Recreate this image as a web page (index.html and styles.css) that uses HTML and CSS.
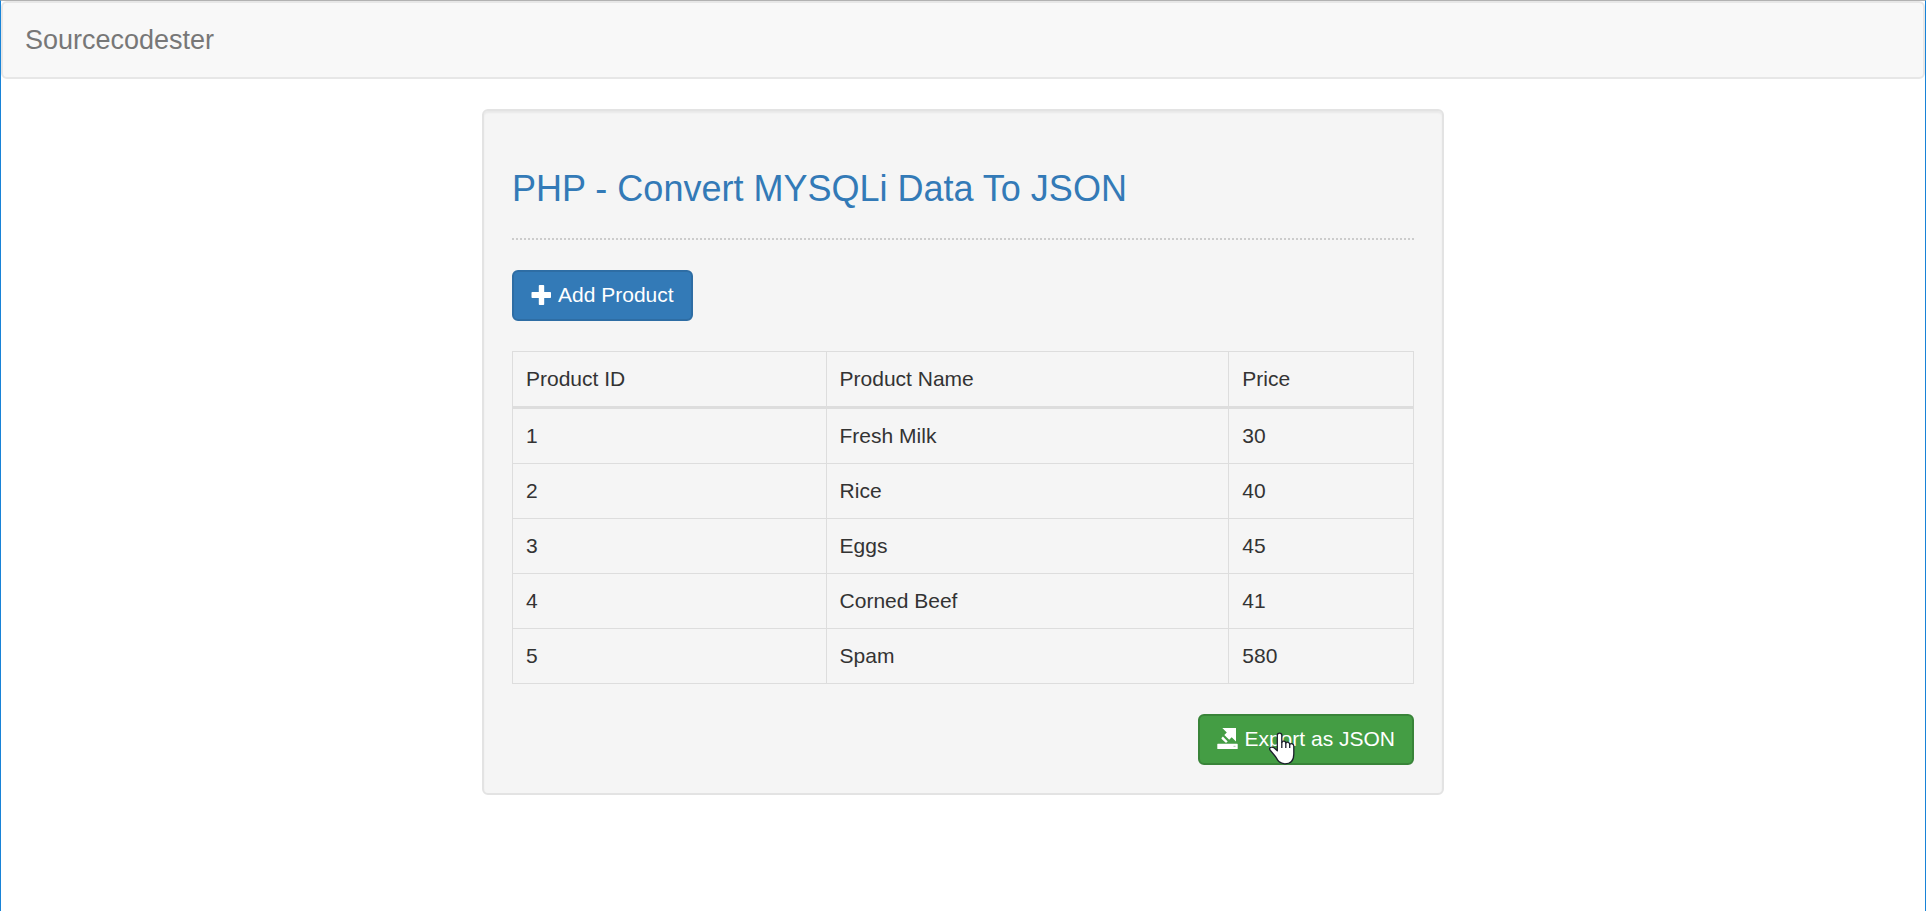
FILE: index.html
```html
<!DOCTYPE html>
<html lang="en">
<head>
<meta charset="utf-8">
<title>PHP - Convert MYSQLi Data To JSON</title>
<link rel="stylesheet" href="styles.css">
</head>
<body>
<nav class="navbar"><a class="brand" href="#">Sourcecodester</a></nav>
<main class="well">
  <h3 class="title">PHP - Convert MYSQLi Data To JSON</h3>
  <hr class="rule">
  <button class="btn btn-primary" type="button">
    <svg class="icon" viewBox="0 0 21 21" aria-hidden="true"><path d="M8.600 0h3.800q.8 0 .8.800v6.200h6q.8 0 .8.800v4.400q0 .8-.8.800h-6v6.200q0 .8-.8.800H8.600q-.8 0-.8-.8V13h-6.500q-.8 0-.8-.8V7.800q0-.8.800-.8h6.500V.8q0-.8.800-.8z"/></svg>
    <span>Add Product</span>
  </button>
  <table class="table">
    <thead>
      <tr><th class="col-id" scope="col">Product ID</th><th class="col-name" scope="col">Product Name</th><th scope="col">Price</th></tr>
    </thead>
    <tbody>
      <tr><td>1</td><td>Fresh Milk</td><td>30</td></tr>
      <tr><td>2</td><td>Rice</td><td>40</td></tr>
      <tr><td>3</td><td>Eggs</td><td>45</td></tr>
      <tr><td>4</td><td>Corned Beef</td><td>41</td></tr>
      <tr><td>5</td><td>Spam</td><td>580</td></tr>
    </tbody>
  </table>
  <button class="btn btn-success" type="button">
    <svg class="icon" viewBox="0 1 21 21" aria-hidden="true"><path d="M5.300 0H19v13.500l-4.300-4.200-2.500 2.500L7.300 6.900l2.500-2.500z"/><path d="M5.900 8.600l4.800 4.800-1.200 1q-.7.500-1.300-.1L4.700 11q-.6-.7 0-1.300z"/><path d="M.8 15.700h19.400q.5 0 .5.500v4.300q0 .5-.5.500H.8q-.5 0-.5-.5v-4.300q0-.5.500-.5z"/><path class="light" d="M16.500 18.300h2"/></svg>
    <span>Export as JSON</span>
    <svg class="cursor" viewBox="0 0 26 33" aria-hidden="true"><path d="M8.300 3.200C8.300.3 12.800.3 12.800 3.200V10.300C14 8.400 16.600 9 16.800 11 18.200 9.500 20.600 10.200 20.700 12.200 22.400 11 24.800 12 24.800 14.200V22C24.800 28.500 21.500 31.800 16 31.800 10.500 31.800 8.800 28.500 6.800 25L1 18C-.4 15.800 2.500 14.300 5 15.800L8.300 18.800z"/><path d="M12.800 10v6M16.800 11v5M20.700 12v4"/></svg>
  </button>
</main>
</body>
</html>
```
FILE: styles.css
```css
* { box-sizing: border-box; }

body {
  margin: 0;
  min-height: 100vh;
  border: 1px solid #1883d7;
  border-top-color: #b2b2b2;
  border-bottom: 0;
  background: #fff;
  color: #333;
  font: 21px/30px "Liberation Sans", Arial, sans-serif;
}

.navbar {
  display: flex;
  align-items: center;
  padding: 22px;
  border: 2px solid #e7e7e7;
  border-radius: 6px;
  background: #f8f8f8;
}

.brand {
  color: #777;
  font-size: 27px;
  line-height: 30px;
  text-decoration: none;
}

.well {
  display: flex;
  flex-direction: column;
  align-items: flex-start;
  gap: 30px;
  width: 50%;
  margin: 30px auto;
  padding: 28px;
  border: 2px solid #e3e3e3;
  border-radius: 6px;
  background: #f5f5f5;
  box-shadow: inset 0 2px 2px rgba(0, 0, 0, .05);
}

.title {
  margin: 30px 0 0;
  color: #337ab7;
  font-size: 36px;
  font-weight: 400;
  line-height: 39px;
}

.rule {
  width: 100%;
  margin: 0;
  border: 0;
  border-top: 2px dotted #ccc;
}

.btn {
  position: relative;
  display: flex;
  align-items: center;
  gap: 6px;
  padding: 8px 17px 9px;
  border: 2px solid;
  border-radius: 6px;
  color: #fff;
  font: inherit;
}

.btn-primary {
  border-color: #2e6da4;
  background: #337ab7;
}

.btn-success {
  align-self: flex-end;
  border-color: #398439;
  background: #449d44;
}

.icon {
  width: 21px;
  height: 21px;
  overflow: visible;
  fill: #fff;
}

.light {
  fill: none;
  stroke: #9fcf9f;
  stroke-width: 1;
}

.cursor {
  position: absolute;
  top: 16px;
  left: 69px;
  width: 26px;
  height: 33px;
  fill: #fff;
  stroke: #1b1f2b;
  stroke-width: 1.3;
  stroke-linejoin: round;
}

.table {
  width: 100%;
  border-collapse: collapse;
  table-layout: fixed;
}

.table th,
.table td {
  padding: 12px 13px;
  border: 1px solid #ddd;
  font-weight: 400;
  text-align: left;
}

.table thead th { border-bottom-width: 3px; }

.col-id { width: 34.8%; }
.col-name { width: 44.7%; }
```
